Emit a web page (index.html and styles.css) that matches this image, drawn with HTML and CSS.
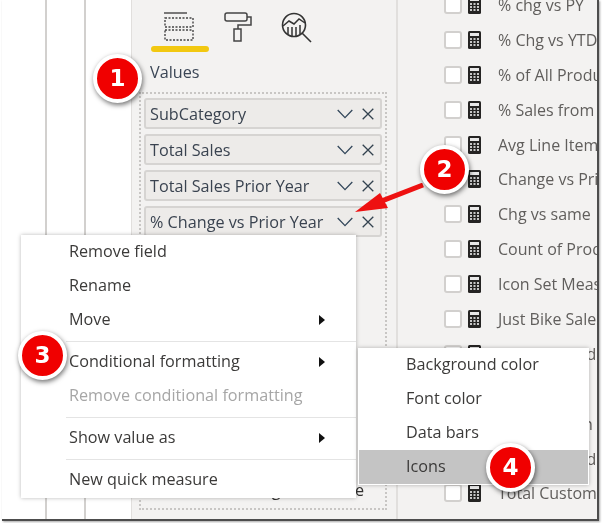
FILE: index.html
```html
<!DOCTYPE html>
<html lang="en">
<head>
<meta charset="utf-8">
<title>Conditional formatting menu</title>
<link rel="stylesheet" href="styles.css">
</head>
<body>
<svg class="defs" width="0" height="0" aria-hidden="true">
  <symbol id="calc" viewBox="0 0 13 18">
    <rect width="13" height="18" rx="1.5" fill="#252423"/>
    <rect x="2" y="2" width="9" height="3" fill="#e8e8e8"/>
    <g fill="#c8c8c8">
      <rect x="2" y="7" width="2" height="2"/><rect x="5.5" y="7" width="2" height="2"/><rect x="9" y="7" width="2" height="2"/>
      <rect x="2" y="10" width="2" height="2"/><rect x="5.5" y="10" width="2" height="2"/><rect x="9" y="10" width="2" height="2"/>
      <rect x="2" y="13" width="2" height="2"/><rect x="5.5" y="13" width="2" height="2"/><rect x="9" y="13" width="2" height="2"/>
    </g>
  </symbol>
  <symbol id="chev" viewBox="0 0 16 10">
    <path d="M0.7 1 L8 8.6 L15.3 1" fill="none" stroke="#33475b" stroke-width="1.3"/>
  </symbol>
  <symbol id="cross" viewBox="0 0 12 12">
    <path d="M0.7 0.7 L11.3 11.3 M11.3 0.7 L0.7 11.3" fill="none" stroke="#33424f" stroke-width="1.3"/>
  </symbol>
</svg>
<div class="frame">
  <div class="rail rail-a"></div>
  <div class="rail rail-b"></div>
  <div class="rail rail-c"></div>
  <section class="fields">
    <div class="tabs">
      <div class="tab tab-active">
        <svg class="ico-fields" width="30" height="29" viewBox="0 0 30 29">
          <path d="M0 1H23" stroke="#444" stroke-width="1.4"/>
          <rect x="1" y="6" width="28" height="9" fill="none" stroke="#444" stroke-width="1.4" stroke-dasharray="2 1.5"/>
          <rect x="1" y="18" width="28" height="10" fill="none" stroke="#444" stroke-width="1.4" stroke-dasharray="2 1.5"/>
        </svg>
      </div>
      <div class="tab">
        <svg width="28" height="30" viewBox="0 0 28 30">
          <rect x="1" y="1" width="22" height="8" rx="2" fill="none" stroke="#444" stroke-width="1.5"/>
          <path d="M23 5H27V13H14V17" fill="none" stroke="#444" stroke-width="1.5"/>
          <rect x="10" y="17" width="7" height="12" fill="none" stroke="#444" stroke-width="1.5"/>
        </svg>
      </div>
      <div class="tab">
        <svg width="31" height="31" viewBox="0 0 31 31">
          <circle cx="13" cy="13" r="11.5" fill="none" stroke="#333" stroke-width="1.6"/>
          <path d="M2 14 L8 9 L13 12 L18 7 L24 11" fill="none" stroke="#333" stroke-width="1.5"/>
          <path d="M7 15V22 M11 15V24 M15 15V24 M19 13V22" stroke="#333" stroke-width="1.5"/>
          <path d="M21 21 L30 30" stroke="#333" stroke-width="1.6"/>
        </svg>
      </div>
    </div>
    <div class="underline"></div>
    <h2 class="well-title">Values</h2>
    <div class="well">
      <div class="pill"><span class="pill-name">SubCategory</span><svg class="chev"><use href="#chev"/></svg><svg class="cross"><use href="#cross"/></svg></div>
      <div class="pill"><span class="pill-name">Total Sales</span><svg class="chev"><use href="#chev"/></svg><svg class="cross"><use href="#cross"/></svg></div>
      <div class="pill"><span class="pill-name">Total Sales Prior Year</span><svg class="chev"><use href="#chev"/></svg><svg class="cross"><use href="#cross"/></svg></div>
      <div class="pill"><span class="pill-name">% Change vs Prior Year</span><svg class="chev"><use href="#chev"/></svg><svg class="cross"><use href="#cross"/></svg></div>
      <div class="well-hint">Drag fields here</div>
    </div>
  </section>
  <section class="list">
    <div class="row"><span class="box"></span><svg class="calc"><use href="#calc"/></svg><span>% chg vs PY</span></div>
    <div class="row"><span class="box"></span><svg class="calc"><use href="#calc"/></svg><span>% Chg vs YTD Last Year</span></div>
    <div class="row"><span class="box"></span><svg class="calc"><use href="#calc"/></svg><span>% of All Products</span></div>
    <div class="row"><span class="box"></span><svg class="calc"><use href="#calc"/></svg><span>% Sales from Bikes</span></div>
    <div class="row"><span class="box"></span><svg class="calc"><use href="#calc"/></svg><span>Avg Line Item Value</span></div>
    <div class="row"><span class="box"></span><svg class="calc"><use href="#calc"/></svg><span>Change vs Prior Year</span></div>
    <div class="row"><span class="box"></span><svg class="calc"><use href="#calc"/></svg><span>Chg vs same</span></div>
    <div class="row"><span class="box"></span><svg class="calc"><use href="#calc"/></svg><span>Count of Products</span></div>
    <div class="row"><span class="box"></span><svg class="calc"><use href="#calc"/></svg><span>Icon Set Measure</span></div>
    <div class="row"><span class="box"></span><svg class="calc"><use href="#calc"/></svg><span>Just Bike Sales Total</span></div>
    <div class="row"><span class="box"></span><svg class="calc"><use href="#calc"/></svg><span>Number Sold</span></div>
    <div class="row"><span class="box"></span><svg class="calc"><use href="#calc"/></svg><span>Sales Total</span></div>
    <div class="row"><span class="box"></span><svg class="calc"><use href="#calc"/></svg><span>Sales Margin</span></div>
    <div class="row"><span class="box"></span><svg class="calc"><use href="#calc"/></svg><span>Number Sold</span></div>
    <div class="row"><span class="box"></span><svg class="calc"><use href="#calc"/></svg><span>Total Customers</span></div>
  </section>
</div>

<svg class="arrow" width="80" height="36" viewBox="0 0 80 36">
  <path d="M69 2 L28 17.8" stroke="#ee1111" stroke-width="5" fill="none"/>
  <path d="M1 29 L26 10 L34 25 Z" fill="#ee1111"/>
</svg>

<div class="menu">
  <div class="item">Remove field</div>
  <div class="item">Rename</div>
  <div class="item has-sub">Move</div>
  <div class="sep"></div>
  <div class="item has-sub">Conditional formatting</div>
  <div class="item item-off">Remove conditional formatting</div>
  <div class="sep"></div>
  <div class="item has-sub">Show value as</div>
  <div class="sep"></div>
  <div class="item">New quick measure</div>
</div>

<div class="submenu">
  <div class="subitem">Background color</div>
  <div class="subitem">Font color</div>
  <div class="subitem">Data bars</div>
  <div class="subitem subitem-on">Icons</div>
</div>

<div class="badge badge-1">1</div>
<div class="badge badge-2">2</div>
<div class="badge badge-3">3</div>
<div class="badge badge-4">4</div>
</body>
</html>
```

FILE: styles.css
```css
html, body {
  margin: 0;
  padding: 0;
  width: 602px;
  height: 523px;
  overflow: hidden;
  background: #fff;
}
body {
  position: relative;
  font-family: "Open Sans", "Noto Sans", sans-serif;
  font-size: 16.2px;
  color: #323130;
  filter: blur(0.35px);
}
.defs { position: absolute; }

.frame {
  display: flex;
  width: 595px;
  height: 519px;
  margin-left: 2px;
  border-right: 2px solid #4d4d4d;
  border-bottom: 2px solid #4d4d4d;
  box-shadow: 1px 1px 2px rgba(0,0,0,.35);
  overflow: hidden;
  background: #fff;
}
.rail { flex: none; border-right: 2px solid #d2d0ce; }
.rail-a { width: 43px; }
.rail-b { width: 37px; }
.rail-c { width: 45px; border-right: 0; }

.fields {
  flex: none;
  width: 267px;
  box-sizing: border-box;
  padding: 0 10px 0 7px;
  background: #f3f2f1;
  border-left: 1px solid #e1dfdd;
  border-right: 2px solid #e1dfdd;
}
.tabs {
  display: flex;
  align-items: flex-start;
  height: 46px;
  padding: 12px 0 0 25px;
  box-sizing: border-box;
}
.tab { flex: none; height: 31px; }
.tab svg { display: block; }
.tab-active { width: 60px; }
.tab-active + .tab { width: 57px; }
.underline {
  width: 58px;
  height: 6px;
  margin-left: 12px;
  border-radius: 3px;
  background: #f2c811;
}
.well-title {
  margin: 8px 0 0 11px;
  height: 32px;
  font-size: 16.2px;
  font-weight: 400;
  line-height: 24px;
  color: #3b4656;
}
.well {
  width: 248px;
  height: 418px;
  box-sizing: border-box;
  padding: 4px 3px 0 3px;
  border: 2px dotted #c8c6c4;
  display: flex;
  flex-direction: column;
  gap: 5px;
}
.pill {
  display: flex;
  align-items: center;
  flex: none;
  height: 31px;
  box-sizing: border-box;
  padding: 0 6px 0 4px;
  background: #edebe9;
  border: 2px solid #d6d4d2;
  border-radius: 3px;
  color: #3a4350;
}
.pill-name { flex: 1; white-space: nowrap; }
.chev { width: 16px; height: 10px; flex: none; margin-right: 9px; }
.cross { width: 12px; height: 12px; flex: none; }
.well-hint {
  margin-top: 237px;
  padding-right: 18px;
  text-align: right;
  line-height: 22px;
  white-space: nowrap;
}

.list {
  flex: 1;
  min-width: 0;
  margin-top: -12.5px;
  background: #f3f2f1;
  height: 532px;
  padding-left: 46px;
  overflow: hidden;
  font-size: 16px;
}
.row {
  display: flex;
  align-items: center;
  height: 34.9px;
  white-space: nowrap;
  color: #605e5c;
}
.box {
  flex: none;
  width: 14px;
  height: 14px;
  border: 2px solid #d2d0ce;
  border-radius: 3px;
  background: #fff;
}
.calc { flex: none; width: 13px; height: 18px; margin: 0 17px 0 6px; }

.arrow { position: absolute; left: 354px; top: 183px; }

.menu, .submenu {
  position: absolute;
  background: #fff;
  box-shadow: 0 0 4px rgba(0,0,0,.28);
  color: #3b3a39;
}
.menu {
  left: 21px;
  top: 235px;
  width: 335px;
  height: 263px;
}
.item {
  position: relative;
  height: 34px;
  line-height: 33px;
  padding-left: 48px;
  white-space: nowrap;
}
.item-off { color: #a6a6a6; }
.has-sub::after {
  content: "";
  position: absolute;
  left: 298px;
  top: 12px;
  border-left: 6px solid #111;
  border-top: 5px solid transparent;
  border-bottom: 5px solid transparent;
}
.sep {
  height: 1px;
  margin: 4px 0 3px 45px;
  background: #e4e4e4;
}
.submenu {
  left: 358px;
  top: 348px;
  width: 231px;
  height: 137px;
  box-sizing: border-box;
  padding: 0 1px;
}
.subitem {
  height: 34px;
  line-height: 33px;
  padding-left: 47px;
}
.subitem-on { background: #c4c4c4; }

.badge {
  position: absolute;
  width: 41px;
  height: 41px;
  border: 4px solid #fff;
  border-radius: 50%;
  background: #f00000;
  box-shadow: 1px 2px 5px rgba(0,0,0,.55);
  color: #fff;
  font-family: "DejaVu Sans", sans-serif;
  font-size: 23px;
  font-weight: 700;
  line-height: 41px;
  text-align: center;
}
.badge-1 { left: 93px; top: 54px; }
.badge-2 { left: 420px; top: 145px; }
.badge-3 { left: 18px; top: 331px; }
.badge-4 { left: 486px; top: 443px; }
```
